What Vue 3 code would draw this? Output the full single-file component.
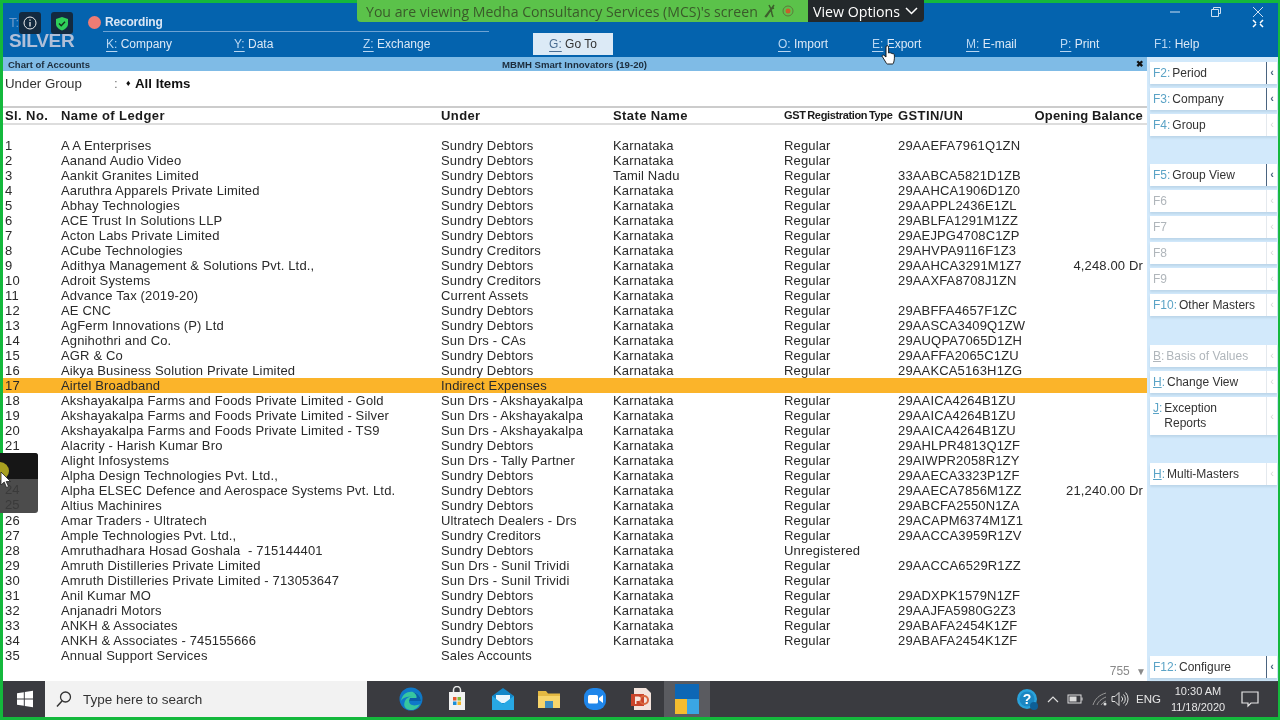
<script setup>
const navLeft = [
  { key: 'K', label: 'Company', cls: 'w128' },
  { key: 'Y', label: 'Data', cls: 'w129' },
  { key: 'Z', label: 'Exchange', cls: 'w170' },
]
const navRight = [
  { key: 'O', label: 'Import' },
  { key: 'E', label: 'Export' },
  { key: 'M', label: 'E-mail' },
  { key: 'P', label: 'Print' },
  { key: 'F1', label: 'Help', plain: true },
]

const ledgers = [
  ['A A Enterprises', 'Sundry Debtors', 'Karnataka', 'Regular', '29AAEFA7961Q1ZN', ''],
  ['Aanand Audio Video', 'Sundry Debtors', 'Karnataka', 'Regular', '', ''],
  ['Aankit Granites Limited', 'Sundry Debtors', 'Tamil Nadu', 'Regular', '33AABCA5821D1ZB', ''],
  ['Aaruthra Apparels Private Limited', 'Sundry Debtors', 'Karnataka', 'Regular', '29AAHCA1906D1Z0', ''],
  ['Abhay Technologies', 'Sundry Debtors', 'Karnataka', 'Regular', '29AAPPL2436E1ZL', ''],
  ['ACE Trust In Solutions LLP', 'Sundry Debtors', 'Karnataka', 'Regular', '29ABLFA1291M1ZZ', ''],
  ['Acton Labs Private Limited', 'Sundry Debtors', 'Karnataka', 'Regular', '29AEJPG4708C1ZP', ''],
  ['ACube Technologies', 'Sundry Creditors', 'Karnataka', 'Regular', '29AHVPA9116F1Z3', ''],
  ['Adithya Management & Solutions Pvt. Ltd.,', 'Sundry Debtors', 'Karnataka', 'Regular', '29AAHCA3291M1Z7', '4,248.00 Dr'],
  ['Adroit Systems', 'Sundry Creditors', 'Karnataka', 'Regular', '29AAXFA8708J1ZN', ''],
  ['Advance Tax (2019-20)', 'Current Assets', 'Karnataka', 'Regular', '', ''],
  ['AE CNC', 'Sundry Debtors', 'Karnataka', 'Regular', '29ABFFA4657F1ZC', ''],
  ['AgFerm Innovations (P) Ltd', 'Sundry Debtors', 'Karnataka', 'Regular', '29AASCA3409Q1ZW', ''],
  ['Agnihothri and Co.', 'Sun Drs - CAs', 'Karnataka', 'Regular', '29AUQPA7065D1ZH', ''],
  ['AGR & Co', 'Sundry Debtors', 'Karnataka', 'Regular', '29AAFFA2065C1ZU', ''],
  ['Aikya Business Solution Private Limited', 'Sundry Debtors', 'Karnataka', 'Regular', '29AAKCA5163H1ZG', ''],
  ['Airtel Broadband', 'Indirect Expenses', '', '', '', ''],
  ['Akshayakalpa Farms and Foods Private Limited - Gold', 'Sun Drs - Akshayakalpa', 'Karnataka', 'Regular', '29AAICA4264B1ZU', ''],
  ['Akshayakalpa Farms and Foods Private Limited - Silver', 'Sun Drs - Akshayakalpa', 'Karnataka', 'Regular', '29AAICA4264B1ZU', ''],
  ['Akshayakalpa Farms and Foods Private Limited - TS9', 'Sun Drs - Akshayakalpa', 'Karnataka', 'Regular', '29AAICA4264B1ZU', ''],
  ['Alacrity - Harish Kumar Bro', 'Sundry Debtors', 'Karnataka', 'Regular', '29AHLPR4813Q1ZF', ''],
  ['Alight Infosystems', 'Sun Drs - Tally Partner', 'Karnataka', 'Regular', '29AIWPR2058R1ZY', ''],
  ['Alpha Design Technologies Pvt. Ltd.,', 'Sundry Debtors', 'Karnataka', 'Regular', '29AAECA3323P1ZF', ''],
  ['Alpha ELSEC Defence and Aerospace Systems Pvt. Ltd.', 'Sundry Debtors', 'Karnataka', 'Regular', '29AAECA7856M1ZZ', '21,240.00 Dr'],
  ['Altius Machinires', 'Sundry Debtors', 'Karnataka', 'Regular', '29ABCFA2550N1ZA', ''],
  ['Amar Traders - Ultratech', 'Ultratech Dealers - Drs', 'Karnataka', 'Regular', '29ACAPM6374M1Z1', ''],
  ['Ample Technologies Pvt. Ltd.,', 'Sundry Creditors', 'Karnataka', 'Regular', '29AACCA3959R1ZV', ''],
  ['Amruthadhara Hosad Goshala  - 715144401', 'Sundry Debtors', 'Karnataka', 'Unregistered', '', ''],
  ['Amruth Distilleries Private Limited', 'Sun Drs - Sunil Trividi', 'Karnataka', 'Regular', '29AACCA6529R1ZZ', ''],
  ['Amruth Distilleries Private Limited - 713053647', 'Sun Drs - Sunil Trividi', 'Karnataka', 'Regular', '', ''],
  ['Anil Kumar MO', 'Sundry Debtors', 'Karnataka', 'Regular', '29ADXPK1579N1ZF', ''],
  ['Anjanadri Motors', 'Sundry Debtors', 'Karnataka', 'Regular', '29AAJFA5980G2Z3', ''],
  ['ANKH & Associates', 'Sundry Debtors', 'Karnataka', 'Regular', '29ABAFA2454K1ZF', ''],
  ['ANKH & Associates - 745155666', 'Sundry Debtors', 'Karnataka', 'Regular', '29ABAFA2454K1ZF', ''],
  ['Annual Support Services', 'Sales Accounts', '', '', '', ''],
]

const group1 = [
  { key: 'F2', label: 'Period', active: true },
  { key: 'F3', label: 'Company', active: true },
  { key: 'F4', label: 'Group' },
]
const group2 = [
  { key: 'F5', label: 'Group View', active: true },
  { key: 'F6', off: true },
  { key: 'F7', off: true },
  { key: 'F8', off: true },
  { key: 'F9', off: true },
  { key: 'F10', label: 'Other Masters' },
]
const group3 = [
  { key: 'B', label: 'Basis of Values', off: true, under: true },
  { key: 'H', label: 'Change View', under: true },
]
</script>

<template>
  <div class="screen">
    <header class="topbar">
      <div class="brand-col">
        <div class="faint">T: Pr</div>
        <div class="silver">SILVER</div>
      </div>
      <div class="top-main">
        <div class="title-row">
          <div class="win-btns">
            <svg width="12" height="12" viewBox="0 0 12 12"><path d="M1 6h10" stroke="#cfe0f2" stroke-width="1" /></svg>
            <svg width="12" height="12" viewBox="0 0 12 12"><path d="M3.5 3.5V1.5h7v6h-2M1.500 3.500h7v7h-7z" stroke="#cfe0f2" fill="none" /></svg>
            <svg width="14" height="22" viewBox="0 0 14 22">
              <path d="M2 1l10 10M12 1L2 11" stroke="#cfe0f2" fill="none" />
              <path d="M2 14l3 3M12 14l-3 3M2 21l3-3M12 21l-3-3" stroke="#fff" stroke-width="1.500" fill="none" />
            </svg>
          </div>
        </div>
        <nav class="nav">
          <div v-for="n in navLeft" :key="n.key" class="nav-item" :class="n.cls">
            <span class="hot">{{ n.key }}:</span>&nbsp;{{ n.label }}
          </div>
          <div class="goto"><span class="goto-key">G:</span>&nbsp;Go To</div>
          <div class="nav-right">
            <div v-for="n in navRight" :key="n.key" class="nav-item w94">
              <span :class="n.plain ? 'hot-plain' : 'hot'">{{ n.key }}:</span>&nbsp;{{ n.label }}
            </div>
          </div>
        </nav>
      </div>
    </header>

    <div class="work">
      <div class="left">
        <div class="subbar">
          <span>Chart of Accounts</span>
          <span class="sub-center">MBMH Smart Innovators (19-20)</span>
          <span class="sub-close">✖</span>
        </div>
        <main class="report">
          <div class="under-group">
            <span class="ug-label">Under Group</span>
            <span class="ug-colon">:</span>
            <span class="ug-diamond">♦</span>
            <b>All Items</b>
          </div>
          <div class="table-head row-grid">
            <span>Sl. No.</span>
            <span>Name of Ledger</span>
            <span>Under</span>
            <span>State Name</span>
            <span class="narrow">GST Registration Type</span>
            <span>GSTIN/UN</span>
            <span class="right">Opening Balance</span>
          </div>
          <div class="rows">
            <div
              v-for="(r, i) in ledgers"
              :key="i"
              class="row row-grid"
              :class="{ selected: i === 16 }"
            >
              <span>{{ i + 1 }}</span>
              <span class="pre">{{ r[0] }}</span>
              <span>{{ r[1] }}</span>
              <span>{{ r[2] }}</span>
              <span>{{ r[3] }}</span>
              <span>{{ r[4] }}</span>
              <span class="right">{{ r[5] }}</span>
            </div>
          </div>
          <div class="count">755 <span class="count-arrow">▼</span></div>
        </main>
      </div>

      <aside class="panel">
        <div class="pgroup g1">
          <div v-for="b in group1" :key="b.key" class="pbtn" :class="{ active: b.active }">
            <span class="pkey">{{ b.key }}:</span><span class="plabel">{{ b.label }}</span><span class="caret">‹</span>
          </div>
        </div>
        <div class="pgroup g2">
          <div v-for="b in group2" :key="b.key" class="pbtn" :class="{ active: b.active, off: b.off }">
            <span class="pkey">{{ b.key }}<template v-if="b.label">:</template></span><span class="plabel">{{ b.label }}</span><span class="caret">‹</span>
          </div>
        </div>
        <div class="pgroup g3">
          <div v-for="b in group3" :key="b.key" class="pbtn" :class="{ off: b.off }">
            <span class="pkey"><u>{{ b.key }}</u>:</span><span class="plabel">{{ b.label }}</span><span class="caret">‹</span>
          </div>
          <div class="pbtn tall">
            <span class="pkey"><u>J</u>:</span><span class="plabel">Exception<br>Reports</span><span class="caret">‹</span>
          </div>
        </div>
        <div class="pgroup g4">
          <div class="pbtn">
            <span class="pkey"><u>H</u>:</span><span class="plabel">Multi-Masters</span><span class="caret">‹</span>
          </div>
        </div>
        <div class="pgroup g5">
          <div class="pbtn active">
            <span class="pkey">F12:</span><span class="plabel">Configure</span><span class="caret">‹</span>
          </div>
        </div>
      </aside>
    </div>

    <footer class="taskbar">
      <div class="start">
        <svg width="18" height="18" viewBox="0 0 18 18"><path d="M1 3.200l6.800-1v6.300H1zM8.800 2l8.200-1.200v7.700H8.800zM1 9.500h6.800v6.300L1 14.800zM8.800 9.500H17v7.700L8.800 16z" fill="#fff" /></svg>
      </div>
      <div class="search">
        <svg width="18" height="18" viewBox="0 0 18 18"><circle cx="10.500" cy="7" r="5" fill="none" stroke="#333" stroke-width="1.300" /><path d="M7 11l-5 5.500" stroke="#333" stroke-width="1.500" /></svg>
        <span>Type here to search</span>
      </div>
      <div class="task-icons">
        <div class="tico">
          <svg width="26" height="26" viewBox="0 0 26 26"><circle cx="13" cy="13" r="11.500" fill="#0f78c9" /><path d="M3 15C4 8 10 5 15 6c5 1 8 5 8 9h-12c0 4 5 6 11 3-2 4-6 6.500-10 6C7 23 5 20 7 15c1-3 4-4.500 7-4.500-5 0-9 1-11 4.500z" fill="#37c6a0" /><path d="M11 15h12c0-4-3-8-8-9 3 2 4 4 3.500 6H12z" fill="#0a5ea8" /></svg>
        </div>
        <div class="tico">
          <svg width="20" height="26" viewBox="0 0 20 26"><path d="M6.500 6V4a3.500 3.500 0 0 1 7 0v2" fill="none" stroke="#e8e8e8" stroke-width="1.500" /><rect x="2" y="6" width="16" height="18" fill="#f2f2f2" /><rect x="6" y="11" width="3.500" height="3.500" fill="#e3562f" /><rect x="10.500" y="11" width="3.500" height="3.500" fill="#7fba3a" /><rect x="6" y="15.500" width="3.500" height="3.500" fill="#1c8fd8" /><rect x="10.500" y="15.500" width="3.500" height="3.500" fill="#f4b526" /></svg>
        </div>
        <div class="tico">
          <svg width="26" height="26" viewBox="0 0 26 26"><path d="M2 10L13 2l11 8v14H2z" fill="#1487c8" /><path d="M6 9h14v8H6z" fill="#eaf6fd" /><path d="M2 10l11 8 11-8v14H2z" fill="#28a8e4" /></svg>
        </div>
        <div class="tico">
          <svg width="24" height="24" viewBox="0 0 24 24"><path d="M1 4h8l2 2.500h12V21H1z" fill="#e4b943" /><rect x="1" y="9" width="22" height="12" fill="#f7d56b" /><rect x="8" y="14" width="8" height="7" fill="#3f8dc0" /></svg>
        </div>
        <div class="tico">
          <svg width="24" height="24" viewBox="0 0 24 24"><rect x="1" y="1" width="22" height="22" rx="9" fill="#1f86ea" /><rect x="5" y="8" width="10" height="8.500" rx="1.500" fill="#fff" /><path d="M16 11l4-3v8l-4-3z" fill="#fff" /></svg>
        </div>
        <div class="tico">
          <svg width="24" height="26" viewBox="0 0 24 26"><path d="M5 2h12l5 5v17H5z" fill="#f3e3dc" /><rect x="2" y="8" width="13" height="12" fill="#c9442a" /><circle cx="15" cy="14" r="4" fill="none" stroke="#d9683f" stroke-width="2" /><path d="M6 10.500h3.500a2 2 0 0 1 0 4.500H7.500v3H6z" fill="#f7e5dd" /></svg>
        </div>
        <div class="tico active">
          <svg width="24" height="30" viewBox="0 0 24 30"><rect x="0" y="0" width="24" height="15" fill="#0d67b5" /><rect x="0" y="15" width="12" height="15" fill="#f5bd2f" /><rect x="12" y="15" width="12" height="15" fill="#3aa6e4" /></svg>
        </div>
      </div>
      <div class="tray">
        <svg class="t-help" width="22" height="22" viewBox="0 0 22 22"><circle cx="11" cy="11" r="10" fill="#2aa3dc" /><circle cx="11" cy="11" r="7.500" fill="#1b86c2" /><text x="11" y="16" text-anchor="middle" font-size="14" font-weight="700" font-family="Liberation Sans" fill="#fff">?</text><circle cx="18" cy="18" r="4" fill="#0e5f96" /></svg>
        <svg class="t-chev" width="14" height="10" viewBox="0 0 14 10"><path d="M2 8l5-5 5 5" fill="none" stroke="#ddd" stroke-width="1.200" /></svg>
        <svg class="t-batt" width="16" height="10" viewBox="0 0 16 10"><rect x="1" y="1" width="13" height="8" fill="none" stroke="#ddd" /><rect x="2.500" y="2.500" width="7" height="5" fill="#ddd" /><path d="M15 3.500v3" stroke="#ddd" /></svg>
        <svg class="t-wifi" width="16" height="16" viewBox="0 0 16 16"><path d="M1 14C3 8 7 4 14 2M5 14c1-3 4-6 9-8M9 14c1-1 2-3 5-4" fill="none" stroke="#999" stroke-width="1" /><circle cx="13" cy="13" r="1.500" fill="#ddd" /></svg>
        <svg class="t-vol" width="18" height="16" viewBox="0 0 18 16"><path d="M1 5.500h3l4-4v13l-4-4H1z" fill="none" stroke="#ddd" /><path d="M10.500 5.500a3.500 3.500 0 0 1 0 5M12.500 3.500a6.500 6.500 0 0 1 0 9M14.500 1.500a9.500 9.500 0 0 1 0 13" fill="none" stroke="#ddd" /></svg>
        <span class="eng">ENG</span>
        <div class="clock"><div>10:30 AM</div><div>11/18/2020</div></div>
        <svg class="note" width="18" height="18" viewBox="0 0 18 18"><path d="M1 2h16v11h-7l-3 3v-3H1z" fill="none" stroke="#e6e6e6" stroke-width="1.200" /></svg>
      </div>
    </footer>

    <!-- screen share overlays -->
    <div class="share-banner">
      <span>You are viewing Medha Consultancy Services (MCS)'s screen</span>
      <svg width="12" height="14" viewBox="0 0 12 14"><path d="M5 1l2 4 3-1M7 5L4 9l-3 4M7 5l1 5 1 3M10 1L2 13" fill="none" stroke="#3d5f2c" stroke-width="1.500" /></svg>
      <svg width="12" height="12" viewBox="0 0 12 12"><circle cx="6" cy="6" r="5" fill="none" stroke="#5c7a3c" /><circle cx="6" cy="6" r="2.500" fill="#c6602c" /></svg>
    </div>
    <div class="view-options">
      View Options
      <svg width="13" height="8" viewBox="0 0 13 8"><path d="M1 1l5.500 5.500L12 1" fill="none" stroke="#fff" stroke-width="1.500" /></svg>
    </div>
    <div class="shield-a">
      <svg width="14" height="14" viewBox="0 0 14 14"><circle cx="7" cy="7" r="6" fill="none" stroke="#eee" /><path d="M7 6v4.500M7 3.500v1.200" stroke="#eee" stroke-width="1.300" /></svg>
    </div>
    <div class="shield-b">
      <svg width="14" height="15" viewBox="0 0 14 15"><path d="M7 1l6 2v5c0 3-3 5.500-6 6.500C4 13.500 1 11 1 8V3z" fill="#2fd05a" /><path d="M4 7.500l2.200 2.200L10 5.800" fill="none" stroke="#10301a" stroke-width="1.400" /></svg>
    </div>
    <div class="rec-dot"></div>
    <div class="rec-text">Recording</div>
    <div class="rec-line"></div>
    <div class="dark-box">
      <div class="dark-top"></div>
      <div class="dark-nums"><span>24</span><span>25</span></div>
    </div>
    <div class="yellow-dot"></div>
    <svg class="arrow" width="12" height="18" viewBox="0 0 12 18"><path d="M1 1v13l3.200-3 2.300 5.500 2-1-2.300-5H10.500z" fill="#fff" stroke="#222" stroke-width="0.800" /></svg>
    <svg class="hand" width="16" height="21" viewBox="0 0 16 21"><path d="M5 2a1.300 1.300 0 0 1 2.600 0v6l1-.3c.8-.2 1.200.2 1.400.7.700-.4 1.400-.2 1.700.5.700-.3 1.500 0 1.600.9.300 2.500.1 5.500-.8 8.200-.2.600-.5 1-1.100 1H6.500c-.5 0-.8-.3-1.100-.7L1.300 11.500c-.6-.9.600-2 1.500-1.300L5 12z" fill="#fff" stroke="#111" stroke-width="0.900" /></svg>
  </div>
</template>

<style scoped>
.screen {
  position: relative;
  width: 1280px;
  height: 720px;
  box-sizing: border-box;
  padding: 3px 2px 3px 3px;
  background: #14b83c;
  display: flex;
  flex-direction: column;
  overflow: hidden;
  font-family: "Liberation Sans", Arial, sans-serif;
  color: #222;
  filter: blur(0.3px);
}

.topbar {
  height: 54px;
  flex: none;
  background: #0463ae;
  display: flex;
}

.brand-col {
  width: 100px;
  flex: none;
  padding-left: 6px;
  box-sizing: border-box;
}

.faint {
  margin-top: 12px;
  height: 15px;
  font-size: 13px;
  color: #6f9bc8;
}

.silver {
  margin-top: -2px;
  font-size: 19px;
  line-height: 26px;
  font-weight: 700;
  letter-spacing: -0.3px;
  color: #b0bfd8;
}

.top-main {
  flex: 1;
  display: flex;
  flex-direction: column;
}

.title-row {
  height: 30px;
  flex: none;
  display: flex;
  justify-content: flex-end;
}

.win-btns {
  display: flex;
  align-items: flex-start;
  padding-top: 3px;
  padding-right: 13px;
  gap: 29px;
}

.nav {
  display: flex;
  height: 22px;
  align-items: center;
  font-size: 12px;
  color: #dbe8f6;
  padding-left: 3px;
}

.nav-item {
  flex: none;
  white-space: nowrap;
}

.w128 { width: 128px; }
.w129 { width: 129px; }
.w170 { width: 170px; }
.w94 { width: 94px; }

.hot {
  color: #b8d6f2;
  text-decoration: underline;
  text-underline-offset: 3px;
}

.hot-plain {
  color: #b8d6f2;
}

.goto {
  width: 80px;
  height: 22px;
  box-sizing: border-box;
  background: #dceaf6;
  color: #333;
  display: flex;
  align-items: center;
  justify-content: center;
  flex: none;
}

.goto-key {
  color: #4a6d92;
  text-decoration: underline;
  text-underline-offset: 3px;
}

.nav-right {
  display: flex;
  margin-left: 165px;
}

.work {
  flex: 1;
  min-height: 0;
  display: flex;
}

.left {
  width: 1144px;
  flex: none;
  display: flex;
  flex-direction: column;
}

.subbar {
  height: 14px;
  flex: none;
  background: #7fbbe6;
  display: grid;
  grid-template-columns: 1fr auto 1fr;
  align-items: center;
  padding: 0 3px 0 5px;
  font-size: 9.500px;
  font-weight: 700;
  color: #1c2c3c;
}

.sub-center {
  font-size: 9.600px;
  margin-left: -3px;
}

.sub-close {
  justify-self: end;
  font-size: 9px;
  color: #111;
}

.report {
  flex: 1;
  min-height: 0;
  background: #fff;
  display: flex;
  flex-direction: column;
}

.under-group {
  height: 24px;
  display: flex;
  align-items: center;
  font-size: 13.300px;
  padding-left: 2px;
  color: #333;
}

.ug-label {
  width: 109px;
}

.ug-colon {
  width: 12px;
  color: #777;
}

.ug-diamond {
  width: 9px;
  font-size: 9px;
  color: #111;
}

.under-group b {
  color: #111;
}

.row-grid {
  display: grid;
  grid-template-columns: 56px 380px 172px 171px 114px 110px 1fr;
  padding-left: 2px;
  padding-right: 4px;
}

.table-head {
  margin-top: 11px;
  height: 15px;
  border-top: 2px solid #ccc;
  border-bottom: 2px solid #ddd;
  font-size: 13px;
  line-height: 15px;
  font-weight: 700;
  letter-spacing: 0.400px;
  color: #1b1b1b;
  align-items: center;
  white-space: nowrap;
}

.table-head .right {
  letter-spacing: 0.150px;
}

.narrow {
  font-size: 11px;
  letter-spacing: -0.350px;
  word-spacing: -1px;
}

.right {
  text-align: right;
}

.rows {
  margin-top: 13px;
}

.row {
  height: 15px;
  font-size: 13px;
  letter-spacing: 0.150px;
  line-height: 15px;
  color: #2a2a2a;
  white-space: nowrap;
}

.pre {
  white-space: pre;
}

.selected {
  background: #fbb42a;
}

.count {
  margin-top: auto;
  margin-bottom: 3px;
  padding-right: 1px;
  text-align: right;
  font-size: 12px;
  color: #8a8a8a;
}

.count-arrow {
  font-size: 10px;
  margin-left: 3px;
}

.panel {
  flex: 1;
  background: #d2e9fb;
  box-sizing: border-box;
  padding: 5px 1px 3px 3px;
  display: flex;
  flex-direction: column;
}

.pgroup {
  display: flex;
  flex-direction: column;
  gap: 4px;
}

.g2 { margin-top: 28px; }
.g3 { margin-top: 29px; }
.g4 { margin-top: 28px; }
.g5 { margin-top: auto; }

.pbtn {
  height: 22px;
  background: #fff;
  box-shadow: 0 2px 2px #bcd6ea;
  display: flex;
  align-items: center;
  padding-left: 3px;
  font-size: 12px;
  color: #333;
  position: relative;
  white-space: nowrap;
}

.pkey {
  color: #5ba3c6;
  margin-right: 2px;
}

.plabel {
  flex: 1;
}

.caret {
  width: 10px;
  height: 100%;
  flex: none;
  border-left: 1px solid #e4e9ee;
  text-align: center;
  font-size: 11px;
  line-height: 21px;
  color: #d8d8d8;
}

.active .caret {
  border-left-color: #4a6480;
  color: #4a6480;
  font-weight: 700;
}

.off .pkey,
.off .plabel {
  color: #b0b6bb;
}

.tall {
  height: 38px;
  align-items: flex-start;
  padding-top: 4px;
  box-sizing: border-box;
}

.tall .plabel {
  line-height: 15px;
}

.tall .pkey {
  line-height: 15px;
}

.tall .caret {
  height: 38px;
  margin-top: -4px;
  line-height: 38px;
}

.taskbar {
  height: 36px;
  flex: none;
  background: #3a3b40;
  display: flex;
  align-items: stretch;
}

.start {
  width: 42px;
  flex: none;
  display: flex;
  align-items: center;
  justify-content: center;
  padding-left: 2px;
  box-sizing: border-box;
}

.search {
  width: 322px;
  flex: none;
  background: #f2f2f2;
  display: flex;
  align-items: center;
  gap: 10px;
  padding-left: 10px;
  box-sizing: border-box;
  font-size: 13.500px;
  color: #333;
}

.task-icons {
  display: flex;
  margin-left: 21px;
}

.tico {
  width: 46px;
  display: flex;
  align-items: center;
  justify-content: center;
}

.tico.active {
  background: #5a5b60;
}

.tray {
  margin-left: auto;
  display: flex;
  align-items: center;
  color: #e6e6e6;
  font-size: 11.500px;
  padding-right: 19px;
}

.t-chev { margin-left: 8px; }
.t-batt { margin-left: 7px; }
.t-wifi { margin-left: 9px; }
.t-vol { margin-left: 3px; }

.eng {
  margin-left: 7px;
  width: 24px;
}

.clock {
  width: 64px;
  margin: 0 11px 0 6px;
  text-align: center;
  line-height: 16px;
  font-size: 11px;
}

.share-banner {
  position: absolute;
  left: 357px;
  top: 0;
  width: 451px;
  height: 22px;
  box-sizing: border-box;
  padding-left: 9px;
  background: #5bc24a;
  border-radius: 0 0 0 4px;
  display: flex;
  align-items: center;
  gap: 6px;
  font-family: "Open Sans", sans-serif;
  font-size: 14.100px;
  color: #3a5a2a;
  white-space: nowrap;
}

.view-options {
  position: absolute;
  left: 808px;
  top: 0;
  width: 116px;
  height: 22px;
  box-sizing: border-box;
  padding-left: 5px;
  background: #23282b;
  border-radius: 0 0 4px 0;
  display: flex;
  align-items: center;
  gap: 5px;
  font-family: "Open Sans", sans-serif;
  font-size: 14.200px;
  color: #fff;
  white-space: nowrap;
}

.shield-a,
.shield-b {
  position: absolute;
  top: 12px;
  width: 22px;
  height: 22px;
  background: #132a40;
  border-radius: 3px;
  display: flex;
  align-items: center;
  justify-content: center;
}

.shield-a { left: 19px; }
.shield-b { left: 51px; }

.rec-dot {
  position: absolute;
  left: 88px;
  top: 16px;
  width: 13px;
  height: 13px;
  border-radius: 50%;
  background: #ee7c74;
}

.rec-text {
  position: absolute;
  left: 105px;
  top: 15px;
  font-size: 12px;
  color: #d9e6f5;
  font-weight: 700;
  letter-spacing: -0.2px;
}

.rec-line {
  position: absolute;
  left: 103px;
  top: 31px;
  width: 386px;
  height: 1px;
  background: #6ea3d4;
}

.dark-box {
  position: absolute;
  left: 0;
  top: 453px;
  width: 38px;
  height: 60px;
  border-radius: 0 3px 3px 0;
  overflow: hidden;
  background: #4c4c4c;
}

.dark-top {
  height: 26px;
  background: #161616;
}

.dark-nums {
  display: flex;
  flex-direction: column;
  padding: 3px 0 0 5px;
  font-size: 13px;
  line-height: 15px;
  color: #3a3a3a;
}

.yellow-dot {
  position: absolute;
  left: -9px;
  top: 462px;
  width: 18px;
  height: 18px;
  border-radius: 50%;
  background: #a8a020;
}

.arrow {
  position: absolute;
  left: 0;
  top: 471px;
}

.hand {
  position: absolute;
  left: 881px;
  top: 45px;
}
</style>
